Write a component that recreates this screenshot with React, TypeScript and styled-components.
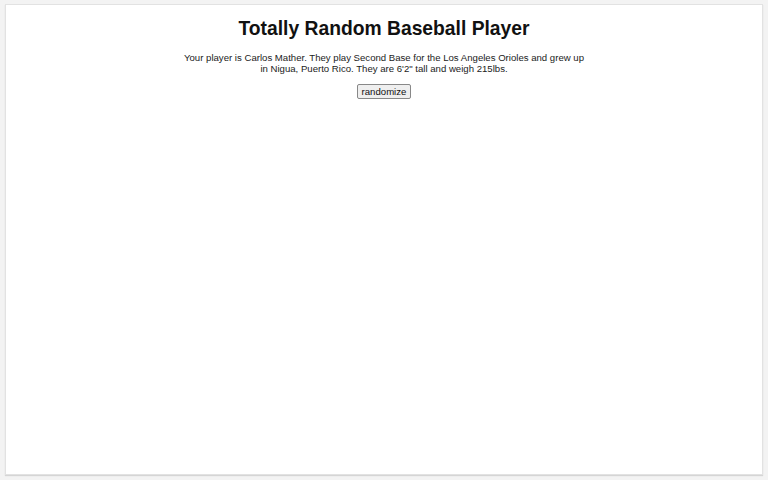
import React, { useState } from 'react'
import styled, { createGlobalStyle } from 'styled-components'

const GlobalStyle = createGlobalStyle`
  html, body {
    margin: 0;
    padding: 0;
    background: #f3f3f3;
  }
  body {
    font-family: "Liberation Sans", Arial, sans-serif;
  }
`

const Page = styled.div`
  padding: 4px 5px 5px;
  height: 480px;
  box-sizing: border-box;
`

const Card = styled.main`
  height: 100%;
  box-sizing: border-box;
  background: #fff;
  border: 1px solid #e2e2e2;
  box-shadow: 0 1px 1px rgba(0, 0, 0, 0.12);
  display: flex;
  flex-direction: column;
  align-items: center;
  padding-top: 13px;
`

const Title = styled.h1`
  margin: 0;
  font-size: 19.3px;
  font-weight: bold;
  color: #111;
`

const Blurb = styled.p`
  margin: 12px 0 0;
  width: 406px;
  font-size: 9.6px;
  line-height: 11px;
  text-align: center;
  color: #222;
`

const RandomizeButton = styled.button`
  margin-top: 10px;
  font-family: "Liberation Sans", Arial, sans-serif;
  font-size: 9.6px;
  padding: 1px 4px;
  background: #efefef;
  border: 1px solid #888;
  border-radius: 2px;
  color: #111;
`

const players = [
  {
    name: 'Carlos Mather',
    position: 'Second Base',
    team: 'Los Angeles Orioles',
    hometown: 'Nigua, Puerto Rico',
    height: `6'2"`,
    weight: 215,
  },
]

export default function App() {
  const [player] = useState(players[0])

  return (
    <Page>
      <GlobalStyle />
      <Card>
        <Title>Totally Random Baseball Player</Title>
        <Blurb>
          Your player is {player.name}. They play {player.position} for the {player.team} and grew up
          in {player.hometown}. They are {player.height} tall and weigh {player.weight}lbs.
        </Blurb>
        <RandomizeButton>randomize</RandomizeButton>
      </Card>
    </Page>
  )
}
